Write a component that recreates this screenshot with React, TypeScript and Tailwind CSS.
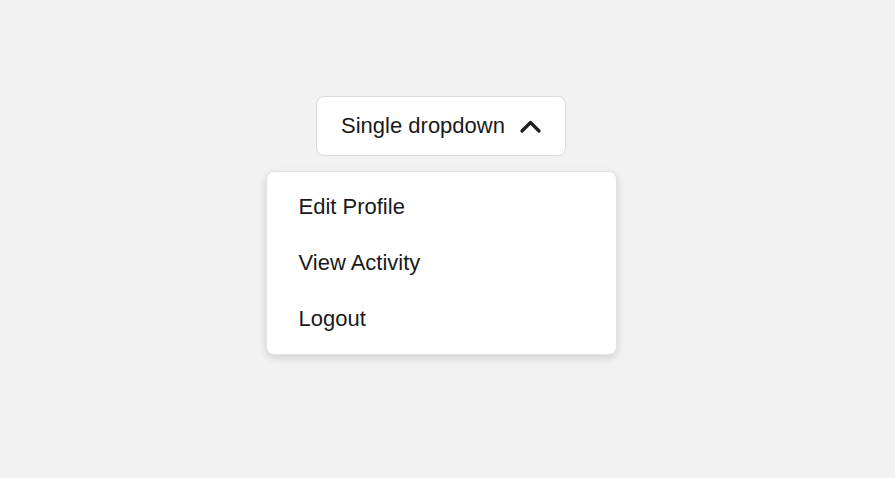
export default function App() {
  const items = ["Edit Profile", "View Activity", "Logout"];

  return (
    <div className="min-h-screen w-full bg-[#f2f2f2] font-['Liberation_Sans',Arial,sans-serif] text-[#1a1a1a]">
      <div className="flex flex-col items-center pt-[96px] pr-[13px]">
        {/* Toggle */}
        <button className="flex h-[60px] w-[250px] items-center justify-center gap-[15px] rounded-[8px] border border-[#dcdcdc] bg-white text-[22px] leading-none">
          <span>Single dropdown</span>
          <svg width="21" height="13" viewBox="0 0 21 13" fill="none">
            <path d="M2 11 L10.5 2.5 L19 11" stroke="#1f1f1f" strokeWidth="3.2" strokeLinecap="round" strokeLinejoin="round" />
          </svg>
        </button>

        {/* Menu */}
        <div className="mt-[15px] w-[351px] rounded-[8px] border border-[#e3e3e3] bg-white py-[7px] shadow-[0_3px_8px_rgba(0,0,0,0.14)]">
          {items.map((item) => (
            <div key={item} className="flex h-[56px] items-center pl-[32px] text-[22px] leading-none">
              {item}
            </div>
          ))}
        </div>
      </div>
    </div>
  );
}
